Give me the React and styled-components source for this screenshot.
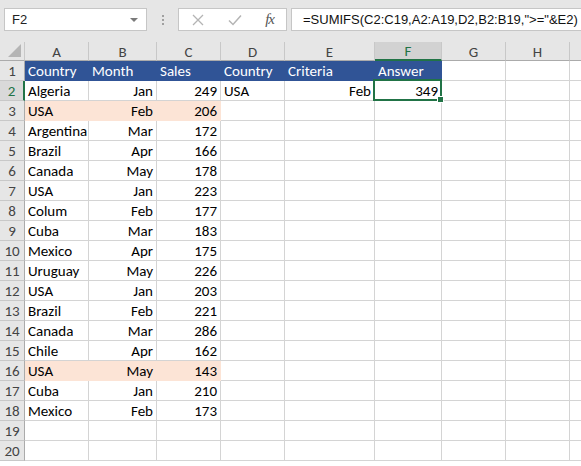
import React from 'react';
import styled, { createGlobalStyle, css } from 'styled-components';

const GlobalStyle = createGlobalStyle`
  body {
    margin: 0;
    background: #ffffff;
    overflow: hidden;
  }
`;

const CELL_FONT = `Calibri, Carlito, Lato, "Liberation Sans", sans-serif`;
const GREEN = '#217346';

const COLS = ['A', 'B', 'C', 'D', 'E', 'F', 'G', 'H', 'I'];
const WIDTHS = [64, 68, 64, 64, 90, 67, 64, 64, 64];

const ROWS = [
  [
    { v: 'Country', head: true },
    { v: 'Month', head: true },
    { v: 'Sales', head: true },
    { v: 'Country', head: true },
    { v: 'Criteria', head: true },
    { v: 'Answer', head: true },
  ],
  [{ v: 'Algeria' }, { v: 'Jan', r: true }, { v: '249', r: true }, { v: 'USA' }, { v: 'Feb', r: true }, { v: '349', r: true, sel: true }],
  ['USA', 'Feb', '206', true],
  ['Argentina', 'Mar', '172'],
  ['Brazil', 'Apr', '166'],
  ['Canada', 'May', '178'],
  ['USA', 'Jan', '223'],
  ['Colum', 'Feb', '177'],
  ['Cuba', 'Mar', '183'],
  ['Mexico', 'Apr', '175'],
  ['Uruguay', 'May', '226'],
  ['USA', 'Jan', '203'],
  ['Brazil', 'Feb', '221'],
  ['Canada', 'Mar', '286'],
  ['Chile', 'Apr', '162'],
  ['USA', 'May', '143', true],
  ['Cuba', 'Jan', '210'],
  ['Mexico', 'Feb', '173'],
  [],
  [],
];

const Page = styled.div`
  width: 581px;
  height: 466px;
  overflow: hidden;
  background: #ffffff;
`;

const Toolbar = styled.div`
  height: 42px;
  box-sizing: border-box;
  background: #e6e6e6;
  display: flex;
  align-items: flex-start;
  padding: 8px 0 0 4px;
  overflow: hidden;
`;

const Box = styled.div`
  height: 23px;
  box-sizing: border-box;
  background: #ffffff;
  border: 1px solid #c6c6c6;
  display: flex;
  align-items: center;
  flex-shrink: 0;
`;

const NameBox = styled(Box)`
  width: 143px;
  padding: 0 8px 0 7px;
  justify-content: space-between;
  font: 13px "Liberation Sans", Arial, sans-serif;
  color: #222;
`;

const Caret = styled.span`
  width: 0;
  height: 0;
  border-left: 4px solid transparent;
  border-right: 4px solid transparent;
  border-top: 4px solid #7a7a7a;
`;

const Dots = styled.div`
  width: 31px;
  height: 23px;
  flex-shrink: 0;
  display: flex;
  flex-direction: column;
  align-items: center;
  justify-content: center;
  gap: 2px;

  span {
    width: 2px;
    height: 2px;
    background: #a0a0a0;
  }
`;

const FnBox = styled(Box)`
  width: 109px;
  padding: 0 10px 0 13px;
  justify-content: space-between;
`;

const Fx = styled.span`
  font: italic 15px "Liberation Serif", "Times New Roman", serif;
  color: #555;
  letter-spacing: -1px;
  padding-right: 2px;
`;

const FormulaBox = styled(Box)`
  width: 320px;
  margin-left: 4px;
  padding-left: 11px;
  font: 13px "Liberation Sans", Arial, sans-serif;
  color: #111;
  white-space: nowrap;
  overflow: hidden;
`;

const Sheet = styled.div`
  display: grid;
  grid-template-columns: 25px ${WIDTHS.map((w) => `${w}px`).join(' ')};
  grid-template-rows: 19px;
  grid-auto-rows: 20px;
  font-family: ${CELL_FONT};
  font-size: 15px;
`;

const Corner = styled.div`
  background: #e6e6e6;
  border-right: 1px solid #c8c8c8;
  border-bottom: 1px solid #ababab;
  box-sizing: border-box;
  position: relative;

  &::after {
    content: '';
    position: absolute;
    right: 3px;
    bottom: 3px;
    width: 0;
    height: 0;
    border-left: 13px solid transparent;
    border-bottom: 13px solid #b5b5b5;
  }
`;

const ColHead = styled.div`
  box-sizing: border-box;
  background: ${(p) => (p.$active ? '#d2d2d2' : '#e6e6e6')};
  color: ${(p) => (p.$active ? GREEN : '#444')};
  border-right: 1px solid #c8c8c8;
  border-bottom: ${(p) => (p.$active ? `2px solid ${GREEN}` : '1px solid #ababab')};
  display: flex;
  align-items: center;
  justify-content: center;
  padding-top: 1px;
`;

const RowHead = styled.div`
  box-sizing: border-box;
  background: ${(p) => (p.$active ? '#d9d9d9' : '#e6e6e6')};
  color: ${(p) => (p.$active ? GREEN : '#444')};
  border-right: ${(p) => (p.$active ? `2px solid ${GREEN}` : '1px solid #ababab')};
  border-bottom: 1px solid #c8c8c8;
  display: flex;
  align-items: center;
  justify-content: center;
`;

const fills = {
  head: css`
    background: #305496;
    color: #ffffff;
    border-color: #305496;
  `,
  pink: css`
    background: #fce4d6;
    border-color: #fce4d6;
  `,
};

const Cell = styled.div`
  box-sizing: border-box;
  border-right: 1px solid #d4d4d4;
  border-bottom: 1px solid #d4d4d4;
  color: #000;
  padding: 0 3px;
  display: flex;
  align-items: center;
  justify-content: ${(p) => (p.$right ? 'flex-end' : 'flex-start')};
  white-space: nowrap;
  overflow: visible;
  position: relative;
  ${(p) => p.$fill && fills[p.$fill]}

  ${(p) =>
    p.$selected &&
    css`
      &::after {
        content: '';
        position: absolute;
        top: -2px;
        left: -2px;
        right: -1px;
        bottom: -1px;
        border: 2px solid ${GREEN};
        pointer-events: none;
      }
      &::before {
        content: '';
        position: absolute;
        right: -3px;
        bottom: -3px;
        width: 5px;
        height: 5px;
        background: ${GREEN};
        border: 1px solid #fff;
        z-index: 2;
      }
    `}
`;

function normalise(row) {
  if (row.length && typeof row[0] === 'object') return row;
  if (!row.length) return [];
  const pink = row[3] === true ? 'pink' : null;
  return [
    { v: row[0], fill: pink },
    { v: row[1], r: true, fill: pink },
    { v: row[2], r: true, fill: pink },
  ];
}

export default function App() {
  return (
    <Page>
      <GlobalStyle />
      <Toolbar>
        <NameBox>
          <span>F2</span>
          <Caret />
        </NameBox>
        <Dots>
          <span />
          <span />
          <span />
        </Dots>
        <FnBox>
          <svg width="12" height="12" viewBox="0 0 12 12">
            <path d="M1 1 L11 11 M11 1 L1 11" stroke="#b4b4b4" strokeWidth="1.3" fill="none" />
          </svg>
          <svg width="14" height="12" viewBox="0 0 14 12">
            <path d="M1 6.5 L5 10.5 L13 1.5" stroke="#b4b4b4" strokeWidth="1.5" fill="none" />
          </svg>
          <Fx>fx</Fx>
        </FnBox>
        <FormulaBox>=SUMIFS(C2:C19,A2:A19,D2,B2:B19,"&gt;="&amp;E2)</FormulaBox>
      </Toolbar>
      <Sheet>
        <Corner />
        {COLS.map((c) => (
          <ColHead key={c} $active={c === 'F'}>
            {c}
          </ColHead>
        ))}
        {ROWS.map((raw, i) => {
          const cells = normalise(raw);
          return (
            <React.Fragment key={i}>
              <RowHead $active={i === 1}>{i + 1}</RowHead>
              {COLS.map((c, j) => {
                const cell = cells[j];
                if (!cell) return <Cell key={c} />;
                return (
                  <Cell
                    key={c}
                    $right={cell.r}
                    $fill={cell.head ? 'head' : cell.fill}
                    $selected={cell.sel}
                  >
                    {cell.v}
                  </Cell>
                );
              })}
            </React.Fragment>
          );
        })}
      </Sheet>
    </Page>
  );
}
